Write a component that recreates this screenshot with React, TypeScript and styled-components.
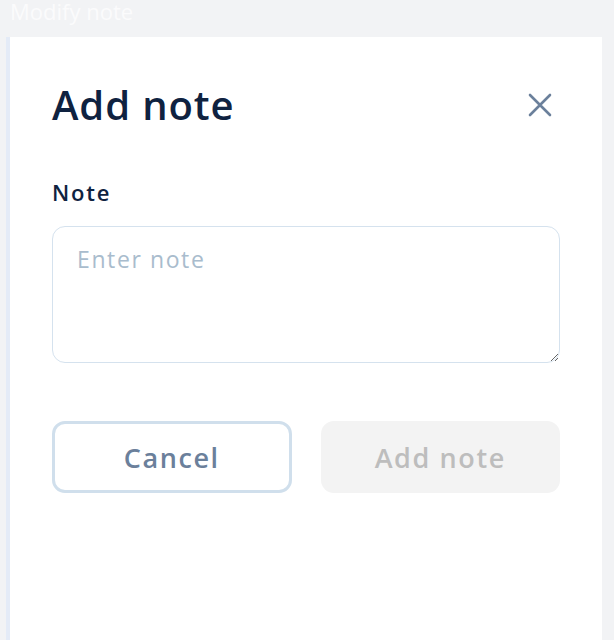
import React from "react"
import styled, { createGlobalStyle } from "styled-components"

const GlobalStyle = createGlobalStyle`
  html, body {
    margin: 0;
    padding: 0;
    background: #f2f3f5;
    font-family: "Open Sans", "Liberation Sans", sans-serif;
  }
`

const CloseIcon: React.FC = () => (
  <svg width="24" height="24" viewBox="0 0 24 24" fill="none">
    <path d="M2 2L22 22M22 2L2 22" stroke="#6b809b" strokeWidth="2.6" strokeLinecap="round" />
  </svg>
)

const App: React.FC = () => {
  return (
    <Page>
      <GlobalStyle />
      <PageTitle>Modify note</PageTitle>
      <Panel>
        <HeaderRow>
          <Heading>Add note</Heading>
          <CloseButton aria-label="Close">
            <CloseIcon />
          </CloseButton>
        </HeaderRow>
        <Label htmlFor="note">Note</Label>
        <NoteInput id="note" placeholder="Enter note" />
        <Actions>
          <Button variant="outline">Cancel</Button>
          <Button variant="disabled" disabled>
            Add note
          </Button>
        </Actions>
      </Panel>
    </Page>
  )
}

const Page = styled.div`
  display: flex;
  flex-direction: column;
  min-height: 100vh;
`

const PageTitle = styled.div`
  height: 37px;
  padding-left: 10px;
  font-size: 22px;
  line-height: 22px;
  color: #fbfbfc;
`

const Panel = styled.div`
  flex-grow: 1;
  display: flex;
  flex-direction: column;
  margin: 0 12px 0 6px;
  padding: 44px 42px 0 42px;
  background: #ffffff;
  border-left: 4px solid #e4ebf7;
`

const HeaderRow = styled.div`
  display: flex;
  align-items: center;
  justify-content: space-between;
`

const Heading = styled.h1`
  margin: 0;
  font-size: 40px;
  line-height: 48px;
  font-weight: 600;
  color: #0f2240;
  letter-spacing: 0.9px;
`

const CloseButton = styled.button`
  display: flex;
  padding: 0;
  margin-right: 8px;
  border: none;
  background: none;
`

const Label = styled.label`
  margin-top: 50px;
  font-size: 22px;
  line-height: 26px;
  font-weight: 600;
  color: #0f2240;
  letter-spacing: 1.8px;
`

const NoteInput = styled.textarea`
  box-sizing: border-box;
  margin-top: 21px;
  height: 137px;
  width: 100%;
  padding: 19px 24px;
  border: 1.5px solid #d5e2ee;
  border-radius: 13px;
  font-family: inherit;
  font-size: 23px;
  line-height: 26px;
  letter-spacing: 1.6px;
  color: #0f2240;
  outline: none;

  &::placeholder {
    color: #a9bccd;
  }
`

const Actions = styled.div`
  display: grid;
  grid-template-columns: 1fr 1fr;
  gap: 29px;
  margin-top: 58px;
`

const Button = styled.button<{ variant: "outline" | "disabled" }>`
  height: 72px;
  border-radius: 13px;
  font-family: inherit;
  font-size: 27px;
  font-weight: 600;
  letter-spacing: 1.6px;
  border: ${(p) => (p.variant === "outline" ? "3px solid #d0dfec" : "none")};
  background: ${(p) => (p.variant === "outline" ? "#ffffff" : "#f3f3f3")};
  color: ${(p) => (p.variant === "outline" ? "#6b809b" : "#bdbdbd")};
`

export default App
